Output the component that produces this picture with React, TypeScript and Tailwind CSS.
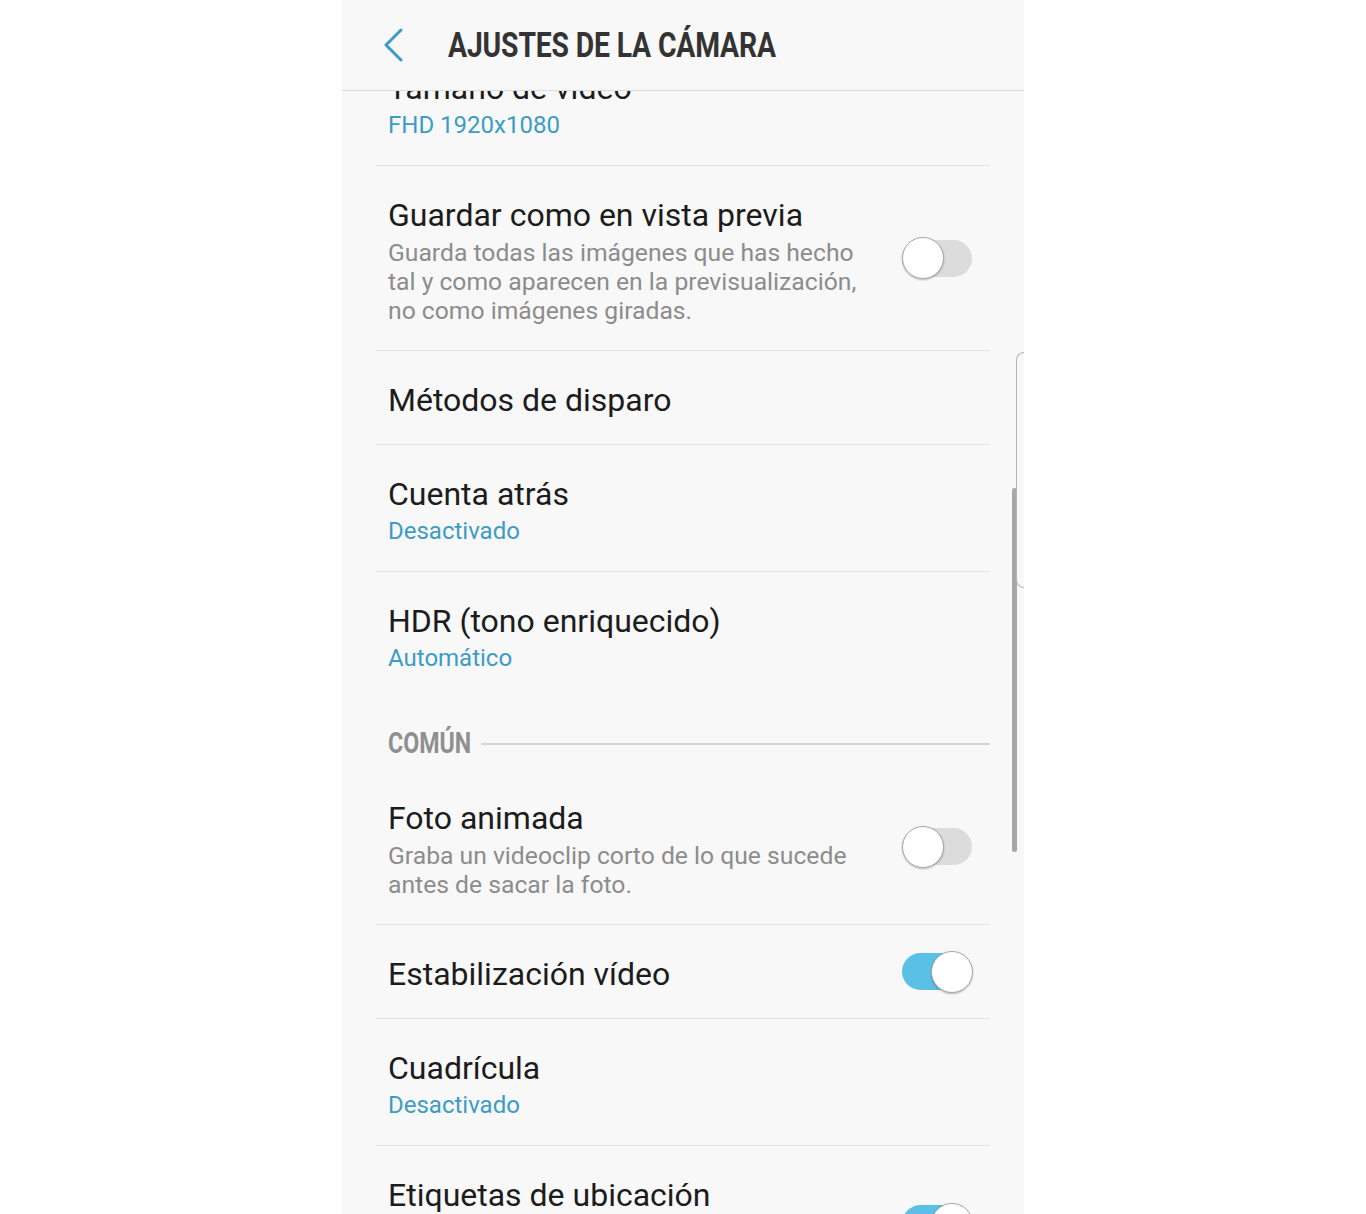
import React from 'react'

type Item = {
  title: string
  sub?: string
  desc?: string[]
  toggle?: 'on' | 'off'
  border?: boolean
}

const before: Item[] = [
  { title: 'Tamaño de vídeo', sub: 'FHD 1920x1080', border: true },
  {
    title: 'Guardar como en vista previa',
    desc: [
      'Guarda todas las imágenes que has hecho',
      'tal y como aparecen en la previsualización,',
      'no como imágenes giradas.',
    ],
    toggle: 'off',
    border: true,
  },
  { title: 'Métodos de disparo', border: true },
  { title: 'Cuenta atrás', sub: 'Desactivado', border: true },
  { title: 'HDR (tono enriquecido)', sub: 'Automático', border: false },
]

const common: Item[] = [
  {
    title: 'Foto animada',
    desc: ['Graba un videoclip corto de lo que sucede', 'antes de sacar la foto.'],
    toggle: 'off',
    border: true,
  },
  { title: 'Estabilización vídeo', toggle: 'on', border: true },
  { title: 'Cuadrícula', sub: 'Desactivado', border: true },
  {
    title: 'Etiquetas de ubicación',
    desc: ['Añade etiquetas de ubicación GPS a tus', 'fotos y vídeos.'],
    toggle: 'on',
    border: true,
  },
]

function Toggle({ on }: { on: boolean }) {
  return (
    <div className="relative w-[71px] h-[42px] flex items-center shrink-0">
      <div className={`w-[70px] h-[37px] rounded-full ${on ? 'bg-[#5bc0e6]' : 'bg-[#dcdcdc]'}`} />
      <div
        className={`absolute top-0 w-[42px] h-[42px] rounded-full bg-white border-[1.5px] border-[#a8a8a8] shadow-[0_1px_2px_rgba(0,0,0,0.25)] ${on ? 'left-[29px]' : 'left-0'}`}
      />
    </div>
  )
}

function Row({ item }: { item: Item }) {
  return (
    <div className={`flex items-center pl-3 pr-[17px] ${item.border ? 'border-b border-[#e3e3e3]' : ''}`}>
      <div className="flex-1 pt-[30px] pb-[25px]">
        <div className="text-[32px] leading-[38px] text-[#1c1c1c] whitespace-nowrap">{item.title}</div>
        {item.sub && <div className="mt-[4px] text-[24px] leading-[29px] text-[#3d9cc4]">{item.sub}</div>}
        {item.desc && (
          <div className="mt-[4px] text-[24.7px] leading-[29px] text-[#8c8c8c] whitespace-nowrap">
            {item.desc.map(l => (
              <div key={l}>{l}</div>
            ))}
          </div>
        )}
      </div>
      {item.toggle && <Toggle on={item.toggle === 'on'} />}
    </div>
  )
}

export default function App() {
  return (
    <div className="w-full h-[1214px] bg-white overflow-hidden" style={{ fontFamily: 'Roboto, "Noto Sans", sans-serif' }}>
      <div className="relative mx-auto w-[682px] h-full bg-[#f8f8f8] flex flex-col overflow-hidden">
        {/* header */}
        <div className="h-[91px] shrink-0 flex items-center pt-[3px] border-b border-[#dcdcdc] bg-[#f8f8f8] z-10">
          <svg width="22" height="34" viewBox="0 0 22 34" className="ml-[41px] -mt-[3px]">
            <path d="M18 2 L3 17 L18 32" fill="none" stroke="#3d9cc4" strokeWidth="3" strokeLinecap="round" strokeLinejoin="round" />
          </svg>
          <div className="ml-[43px] text-[35px] font-bold text-[#333333] whitespace-nowrap inline-block origin-left scale-x-[0.81] tracking-[-0.2px]">
            AJUSTES DE LA CÁMARA
          </div>
        </div>

        {/* scrolled list */}
        <div className="flex-1 overflow-hidden">
          <div className="-mt-[52px] px-[34px]">
            {before.map(it => (
              <Row key={it.title} item={it} />
            ))}

            <div className="h-[71px] flex items-center pl-3 pt-[20px]">
              <div className="w-[80px] text-[29px] font-bold text-[#8f8f8f] whitespace-nowrap origin-left scale-x-[0.8]">COMÚN</div>
              <div className="ml-[13px] flex-1 h-[2px] bg-[#d4d4d4]" />
            </div>

            {common.map(it => (
              <Row key={it.title} item={it} />
            ))}
          </div>
        </div>

        {/* scrollbar */}
        <div className="absolute left-[670px] top-[488px] w-[5px] h-[364px] rounded-full bg-[#a7a7a7]" />
        {/* edge panel handle */}
        <div className="absolute left-[674px] top-[352px] w-[12px] h-[236px] rounded-l-[8px] border border-r-0 border-[#b5b5b5]" />
      </div>
    </div>
  )
}
